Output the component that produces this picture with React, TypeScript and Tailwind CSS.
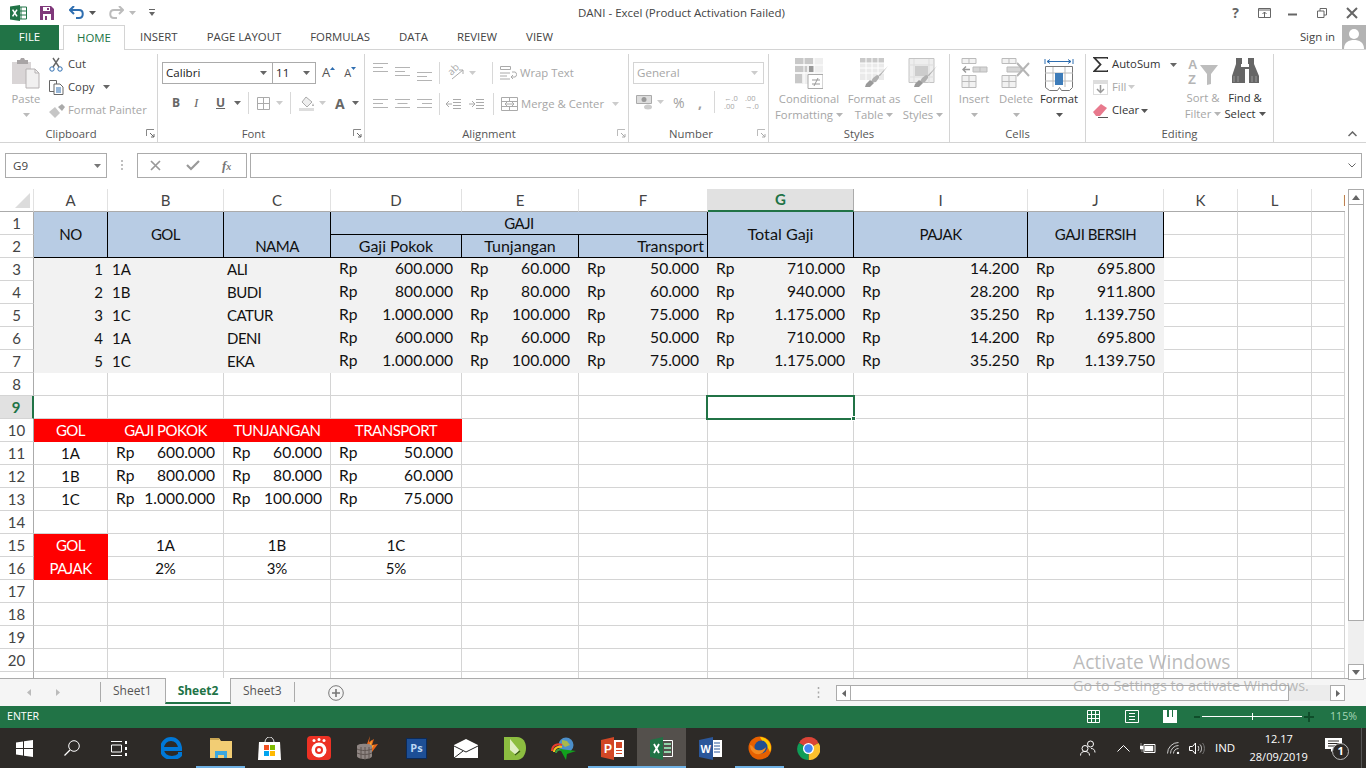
import type { ReactNode } from 'react'
import { twMerge } from 'tailwind-merge'

const Caret = ({ className = '', color = '#777' }: { className?: string; color?: string }) => (
  <svg width="7" height="4" viewBox="0 0 7 4" className={className}>
    <path d="M0 0h7L3.5 4z" fill={color} />
  </svg>
)

const Launcher = ({ dim }: { dim?: boolean }) => (
  <svg width="9" height="9" viewBox="0 0 9 9" className="absolute right-[2px] bottom-[4px]">
    <path d="M.5 7V.5H8" fill="none" stroke={dim ? '#bbb' : '#888'} />
    <path d="M4 4l4 4M8 5v3H5" fill="none" stroke={dim ? '#aaa' : '#666'} />
  </svg>
)

const Lines = ({ x, w = 15, y = 0, align = 'left' }: { x: number; w?: number; y?: number; align?: string }) => (
  <svg width={w} height="12" viewBox="0 0 15 12" style={{ marginLeft: x, marginTop: y }}>
    {[1.5, 5.5, 9.5].map((ly, i) => {
      const short = i === 1 ? 10 : 15
      const sx = align === 'center' ? (15 - short) / 2 : align === 'right' ? 15 - short : 0
      return <path key={ly} d={`M${sx} ${ly}h${short}`} stroke="#b4b4b4" />
    })}
  </svg>
)

const Group = ({ width, label, children, launcher, dim }: { width: string; label: string; children: ReactNode; launcher?: boolean; dim?: boolean }) => (
  <div className={twMerge('relative flex h-[88px] shrink-0 flex-col border-r border-[#d4d4d4]', width)}>
    <div className="relative h-[72px] flex-none">{children}</div>
    <div className={twMerge('flex-1 text-center text-[11.3px] leading-[16px] text-[#555]', launcher && 'pr-[15px]')}>{label}</div>
    {launcher && <Launcher dim={dim} />}
  </div>
)

const BigBtn = ({ icon, l1, l2, width, dim = true, caret = true }: { icon: ReactNode; l1: string; l2?: string; width: string; dim?: boolean; caret?: boolean }) => (
  <div className={twMerge('flex flex-col items-center', width, dim ? 'text-[#a6a6a6]' : 'text-[#333]')}>
    <div className="flex h-[36px] items-start justify-center pt-[3px]">{icon}</div>
    <div className="h-[16px] text-[11.3px] leading-[16px] whitespace-nowrap">{l1}</div>
    <div className="flex h-[16px] items-center gap-[3px] text-[11.3px] leading-[16px] whitespace-nowrap">
      {l2}
      {caret && <Caret color={dim ? '#b5b5b5' : '#555'} />}
    </div>
  </div>
)

const Sep = ({ h = 'h-[22px]', className = '' }: { h?: string; className?: string }) => <div className={twMerge('w-px shrink-0 bg-[#d8d8d8]', h, className)} />

const Clipboard = () => (
  <svg width="30" height="31" viewBox="0 0 30 31">
    <path d="M1 4h19v22H1z" fill="#d9d5d6" />
    <path d="M6 2h3l1-2h3l1 2h3v4H6z" fill="#a8a4a5" />
    <path d="M15 11h9l4 4v15H15z" fill="#f1f0f0" stroke="#b5b1b2" />
    <path d="M24 11v4h4" fill="none" stroke="#b5b1b2" />
  </svg>
)

const CondFmt = () => (
  <svg width="28" height="31" viewBox="0 0 28 31">
    <path d="M0 0h28v26H0z" fill="#eee" />
    <path d="M0 0h18v6H0zM0 8h12v6H0zM0 16h7v9H0z" fill="#c8c8c8" />
    <path d="M14 8h5v6h-5z" fill="#999" />
    <path d="M9 0v26M19 0v26M0 7h28M0 15h28" stroke="#fff" />
    <path d="M14 17h15v14H14z" fill="#fff" stroke="#aaa" transform="translate(-1 -.5)" />
    <path d="M17 22h8M17 26h8M23 20l-4 8" stroke="#999" fill="none" />
  </svg>
)

const TableFmt = () => (
  <svg width="30" height="31" viewBox="0 0 30 31">
    <path d="M1 0h24v22H1z" fill="#eaeaea" />
    <path d="M1 0h24v5H1z" fill="#c9c9c9" />
    <path d="M7 0v22M13 0v22M19 0v22M1 5h24M1 10h24M1 15h24" stroke="#fff" />
    <path d="M29 8l-8 10-3-1-4 3-3 5 6-1 3-4 0-3z" fill="#b0b0b0" />
    <path d="M7 26l4-4 4 3-4 4H6z" fill="#999" />
  </svg>
)

const CellStyle = () => (
  <svg width="30" height="31" viewBox="0 0 30 31">
    <path d="M1 .5h25v24H1z" fill="#eee" stroke="#c4c4c4" />
    <path d="M1 7h25M6 1v24M21 1v24M1 19h25" stroke="#ddd" />
    <path d="M7 8h13v10H7z" fill="#ccc" />
    <path d="M29 8l-8 10-3-1-4 3-3 5 6-1 3-4 0-3z" fill="#b0b0b0" />
    <path d="M7 26l4-4 4 3-4 4H6z" fill="#999" />
  </svg>
)

const InsertIc = () => (
  <svg width="27" height="31" viewBox="0 0 27 31">
    <path d="M1 .5h14v5H1zM8 .5v5M1 17.5h14v12H1zM1 23.5h14M8 17.5v12" fill="#f2f2f2" stroke="#bbb" />
    <path d="M12 9h14v5H12z" fill="#d6d6d6" stroke="#bbb" />
    <path d="M19 9v5" stroke="#bbb" />
    <path d="M2 11.5h7M5 8.5l-3 3 3 3" fill="none" stroke="#999" strokeWidth="1.4" />
  </svg>
)

const DeleteIc = () => (
  <svg width="30" height="31" viewBox="0 0 30 31">
    <path d="M1 .5h14v5H1zM8 .5v5M1 17.5h14v12H1zM1 23.5h14M8 17.5v12" fill="#f2f2f2" stroke="#bbb" />
    <path d="M6 9h14v5H6z" fill="#d6d6d6" stroke="#bbb" />
    <path d="M16 5l12 13M28 5L16 18" stroke="#b5b5b5" strokeWidth="2" />
  </svg>
)

const FormatIc = () => (
  <svg width="30" height="33" viewBox="0 0 30 33">
    <path d="M1 1v5M29 1v5M3 3.500h24M6 1.500l-3 2 3 2M24 1.500l3 2-3 2" fill="none" stroke="#2f6eb0" />
    <path d="M1.500 8.500h27v21l-3 3h-8l-2-3-2 3h-8l-4-3z" fill="#fff" stroke="#777" />
    <path d="M1 15h28M1 23h28M9 9v20M21 9v20" stroke="#bbb" />
    <path d="M11 15h8v12h-8z" fill="#3e7cb9" />
  </svg>
)

const Binoculars = () => (
  <svg width="28" height="27" viewBox="0 0 28 27">
    <path d="M5 1h6v6h-1v3h8V7h-1V1h6v6l5 12v7h-10V12h-4v14H1v-7l4-12z" fill="#666" />
    <path d="M3 19v6M7 19v6M21 19v6M25 19v6" stroke="#999" />
  </svg>
)

const SortIc = () => (
  <svg width="32" height="29" viewBox="0 0 32 29" className="overflow-visible">
    <text x="1" y="12" fontSize="13" fontWeight="bold" fill="#b5b5b5" fontFamily="Liberation Sans, sans-serif">A</text>
    <text x="1" y="27" fontSize="13" fontWeight="bold" fill="#b5b5b5" fontFamily="Liberation Sans, sans-serif">Z</text>
    <path d="M13 8h18l-7 9v10l-4 1V17z" fill="#bdbdbd" />
  </svg>
)

const Tab = ({ children, ml }: { children: ReactNode; ml: string }) => (
  <span className={twMerge('text-[11.4px] text-[#444]', ml)}>{children}</span>
)

const TitleBar = () => (
  <div className="flex h-[25px] items-center text-[#444]">
    <svg width="17" height="16" viewBox="0 0 17 16" className="ml-[10px]">
      <path d="M7 2h9.500v12H7z" fill="#fff" stroke="#217346" />
      <path d="M11 2v12M7 6h9M7 10h9" stroke="#217346" />
      <path d="M0 1.500L10 0v16L0 14.500z" fill="#217346" />
      <path d="M2.600 4.600l4.400 6.800M7 4.600l-4.400 6.800" stroke="#fff" strokeWidth="1.600" />
    </svg>
    <svg width="14" height="14" viewBox="0 0 14 14" className="ml-[13px]">
      <path d="M0 0h11l3 3v11H0z" fill="#80397b" />
      <path d="M3 1h7v4H3z" fill="#fff" />
      <path d="M3 8h8v6H3z" fill="#fff" />
      <path d="M7 2h2v2H7z" fill="#80397b" />
      <path d="M5 10h2v4H5z" fill="#80397b" />
    </svg>
    <svg width="15" height="13" viewBox="0 0 15 13" className="ml-[15px]">
      <path d="M2 4h8c5 0 5 8 0 8H7" fill="none" stroke="#2f6eb0" strokeWidth="2" />
      <path d="M5 0L1 4l4 4" fill="none" stroke="#2f6eb0" strokeWidth="2" />
    </svg>
    <Caret className="ml-[5px]" color="#555" />
    <svg width="15" height="13" viewBox="0 0 15 13" className="ml-[13px]">
      <path d="M13 4H5c-5 0-5 8 0 8h3" fill="none" stroke="#bcbcbc" strokeWidth="2" />
      <path d="M10 0l4 4-4 4" fill="none" stroke="#bcbcbc" strokeWidth="2" />
    </svg>
    <Caret className="ml-[5px]" color="#bbb" />
    <svg width="6" height="7" viewBox="0 0 6 7" className="ml-[13px]">
      <path d="M0 .5h6" stroke="#666" />
      <path d="M0 3h6L3 7z" fill="#666" />
    </svg>
    <div className="ml-[423px] text-[11.5px] whitespace-nowrap">DANI - Excel (Product Activation Failed)</div>
    <div className="ml-auto flex items-center">
      <span className="mr-[19px] text-[14px] font-bold text-[#666]">?</span>
      <svg width="13" height="10" viewBox="0 0 13 10" className="mr-[17px]">
        <path d="M.5.5h12v9H.5zM1 2h11" fill="none" stroke="#666" />
        <path d="M6.500 9V4M4.500 6l2-2 2 2" fill="none" stroke="#666" />
      </svg>
      <svg width="10" height="10" viewBox="0 0 10 10" className="mr-[19px]">
        <path d="M0 6.500h9" stroke="#666" strokeWidth="2" />
      </svg>
      <svg width="10" height="10" viewBox="0 0 10 10" className="mr-[19px]">
        <path d="M.5 3h6.500v6.500H.5zM3 3V.5h6.500V7H7" fill="none" stroke="#666" />
      </svg>
      <svg width="12" height="12" viewBox="0 0 12 12" className="mr-[8px]">
        <path d="M1 1l10 10M11 1L1 11" stroke="#666" strokeWidth="2" />
      </svg>
    </div>
  </div>
)

const TabBar = () => (
  <div className="flex h-[25px] items-center border-b border-[#d4d4d4]">
    <div className="flex h-[25px] w-[59px] items-center justify-center bg-[#217346] text-[11.4px] text-white">FILE</div>
    <div className="relative ml-[4px] flex h-[25px] w-[62px] items-center justify-center border-x border-t border-[#d4d4d4] bg-white text-[11.4px] text-[#217346]">HOME</div>
    <Tab ml="ml-[15px]">INSERT</Tab>
    <Tab ml="ml-[29px]">PAGE LAYOUT</Tab>
    <Tab ml="ml-[29px]">FORMULAS</Tab>
    <Tab ml="ml-[29px]">DATA</Tab>
    <Tab ml="ml-[29px]">REVIEW</Tab>
    <Tab ml="ml-[29px]">VIEW</Tab>
    <div className="ml-auto flex items-center">
      <span className="mr-[7px] text-[11.4px] text-[#444]">Sign in</span>
      <div className="flex h-[24px] w-[24px] items-end justify-center overflow-hidden bg-[#b3b3b3]">
        <svg width="24" height="24" viewBox="0 0 24 24">
          <circle cx="12" cy="9" r="5" fill="#fff" />
          <path d="M2 24c0-7 5-9 10-9s10 2 10 9z" fill="#fff" />
        </svg>
      </div>
    </div>
  </div>
)

const Ribbon = () => (
  <div className="flex h-[93px] items-start border-b border-[#d4d4d4] pt-[4px]">
    <Group width="w-[158px]" label="Clipboard" launcher>
      <div className="flex">
        <div className="ml-[11px] flex w-[30px] flex-col items-center text-[#a6a6a6]">
          <div className="mt-[4px] h-[33px]"><Clipboard /></div>
          <span className="text-[11.3px] leading-[16px]">Paste</span>
          <Caret className="mt-[6px]" color="#bbb" />
        </div>
        <div className="ml-[8px] flex flex-col text-[11.3px]">
          <div className="flex h-[21px] items-center text-[#444]">
            <svg width="14" height="15" viewBox="0 0 14 15" className="mr-[5px]">
              <circle cx="3" cy="12" r="2.200" fill="none" stroke="#2f6eb0" />
              <circle cx="11" cy="12" r="2.200" fill="none" stroke="#2f6eb0" />
              <path d="M4 10L10 1M10 10L4 1" stroke="#666" strokeWidth="1.400" />
            </svg>
            Cut
          </div>
          <div className="flex h-[24px] items-center text-[#444]">
            <svg width="15" height="15" viewBox="0 0 15 15" className="mr-[4px]">
              <path d="M.5.5h7v11h-7z" fill="#fff" stroke="#666" />
              <path d="M5 4h6l3 3v7.500H5z" fill="#fff" stroke="#666" />
              <path d="M7 8h5M7 10h5M7 12h5" stroke="#2f6eb0" />
            </svg>
            Copy
            <Caret className="ml-[9px]" color="#666" />
          </div>
          <div className="flex h-[23px] items-center text-[#a6a6a6]">
            <svg width="16" height="14" viewBox="0 0 16 14" className="mr-[3px]">
              <path d="M9 3l4-3 3 3-3 4z" fill="#aaa" />
              <path d="M0 8l6-5 5 6-5 5z" fill="#c6c6c6" />
            </svg>
            Format Painter
          </div>
        </div>
      </div>
    </Group>
    <Group width="w-[207px]" label="Font" launcher>
      <div className="flex pt-[8px] pl-[4px]">
        <div className="flex h-[22px] w-[111px] items-center justify-between border border-[#ababab] pr-[5px] pl-[3px] text-[11.6px] text-[#222]">
          Calibri <Caret color="#666" />
        </div>
        <div className="-ml-px flex h-[22px] w-[44px] items-center justify-between border border-[#ababab] pr-[5px] pl-[3px] text-[11.6px] text-[#222]">
          11 <Caret color="#666" />
        </div>
        <div className="ml-[6px] flex h-[22px] items-center text-[13px] text-[#555]">
          <span>A</span>
          <svg width="5" height="3" viewBox="0 0 5 3" className="mb-[10px]"><path d="M0 3h5L2.500 0z" fill="#2f6eb0" /></svg>
        </div>
        <div className="ml-[9px] flex h-[22px] items-center text-[11px] text-[#555]">
          <span>A</span>
          <svg width="5" height="3" viewBox="0 0 5 3" className="mb-[10px]"><path d="M0 0h5L2.500 3z" fill="#2f6eb0" /></svg>
        </div>
      </div>
      <div className="mt-[7px] flex h-[24px] items-center text-[#666]">
        <span className="ml-[14px] w-[8px] text-[12px] font-bold">B</span>
        <span className="ml-[14px] w-[8px] font-['Liberation_Serif',serif] text-[13px] italic">I</span>
        <span className="ml-[14px] w-[9px] text-[12px] font-bold underline">U</span>
        <Caret className="ml-[9px]" color="#666" />
        <Sep className="ml-[7px]" />
        <svg width="13" height="13" viewBox="0 0 13 13" className="ml-[8px]">
          <path d="M.5.5h12v12H.5zM6.500 1v11M1 6.500h11" fill="none" stroke="#aaa" />
        </svg>
        <Caret className="ml-[6px]" color="#ccc" />
        <Sep className="ml-[7px]" />
        <svg width="16" height="15" viewBox="0 0 16 15" className="ml-[8px]">
          <path d="M7 1l6 5-5 5-5-5z" fill="#eee" stroke="#aaa" />
          <path d="M0 12h15v3H0z" fill="#ddd" />
          <path d="M14 7l1 3h-2z" fill="#aaa" />
        </svg>
        <Caret className="ml-[4px]" color="#ccc" />
        <span className="ml-[9px] text-[14px] font-bold">A</span>
        <Caret className="ml-[7px]" color="#666" />
      </div>
    </Group>
    <Group width="w-[264px]" label="Alignment" launcher dim>
      <div className="flex h-[38px] items-start pt-[8px]">
        <div className="flex w-[74px]">
          <Lines x={8} />
          <Lines x={7} y={4} />
          <Lines x={7} y={9} />
        </div>
        <Sep />
        <div className="relative mt-[1px] ml-[7px] h-[18px] w-[18px]">
          <span className="absolute top-[1px] left-0 -rotate-45 text-[10px] leading-[10px] text-[#aaa]">ab</span>
          <svg width="18" height="18" viewBox="0 0 18 18" className="absolute inset-0">
            <path d="M5 16L16 7M12 7h4v4" fill="none" stroke="#aaa" />
          </svg>
        </div>
        <Caret className="mt-[9px] ml-[4px]" color="#ccc" />
        <Sep className="ml-[16px]" />
        <div className="ml-[7px] flex h-[22px] items-center text-[11.3px] text-[#a6a6a6]">
          <svg width="17" height="15" viewBox="0 0 17 15" className="mr-[3px]">
            <path d="M.5.5h10v3H.5zM0 7h10M0 10h7M0 13h10" fill="none" stroke="#aaa" />
            <path d="M12 6h3c2 0 2 5 0 5h-4M13 9l-2 2 2 2" fill="none" stroke="#aaa" />
          </svg>
          Wrap Text
        </div>
      </div>
      <div className="flex h-[24px] items-center">
        <div className="flex w-[74px]">
          <Lines x={8} />
          <Lines x={7} align="center" />
          <Lines x={7} align="right" />
        </div>
        <Sep />
        <svg width="15" height="12" viewBox="0 0 15 12" className="ml-[6px]">
          <path d="M7 1.500h8M7 4.500h8M7 7.500h8M7 10.500h8M6 6H0M3 3L0 6l3 3" fill="none" stroke="#aaa" />
        </svg>
        <svg width="15" height="12" viewBox="0 0 15 12" className="ml-[8px]">
          <path d="M7 1.500h8M7 4.500h8M7 7.500h8M7 10.500h8M0 6h6M3 3l3 3-3 3" fill="none" stroke="#aaa" />
        </svg>
        <Sep className="ml-[9px]" />
        <div className="ml-[7px] flex h-[22px] items-center text-[11.3px] text-[#a6a6a6]">
          <svg width="17" height="14" viewBox="0 0 17 14" className="mr-[3px]">
            <path d="M.5.5h16v13H.5zM1 4.500h15M1 9.500h15M8.500 1v3M8.500 10v3M4 7h9M6 5L4 7l2 2M11 5l2 2-2 2" fill="none" stroke="#aaa" />
          </svg>
          Merge &amp; Center
          <Caret className="ml-[8px]" color="#ccc" />
        </div>
      </div>
    </Group>
    <Group width="w-[140px]" label="Number" launcher dim>
      <div className="pt-[8px] pl-[4px]">
        <div className="flex h-[22px] w-[131px] items-center justify-between border border-[#d4d4d4] pr-[5px] pl-[3px] text-[11.6px] text-[#a6a6a6]">
          General <Caret color="#ccc" />
        </div>
      </div>
      <div className="mt-[6px] flex h-[24px] items-center text-[#a6a6a6]">
        <svg width="17" height="15" viewBox="0 0 17 15" className="ml-[7px]">
          <path d="M.5.500h15v8H.5z" fill="#ddd" stroke="#aaa" />
          <circle cx="8" cy="4.500" r="2.500" fill="#999" />
          <ellipse cx="12" cy="12" rx="4" ry="2.500" fill="#ccc" />
        </svg>
        <Caret className="ml-[4px]" color="#ccc" />
        <span className="ml-[9px] w-[13px] text-[14px] text-[#a0a0a0]">%</span>
        <span className="ml-[12px] w-[5px] text-[14px] font-bold text-[#a0a0a0]">,</span>
        <Sep className="ml-[11px]" />
        <div className="ml-[9px] w-[13px] whitespace-nowrap text-[7.5px] leading-[8px]">←.0<br />.00</div>
        <div className="ml-[8px] w-[13px] whitespace-nowrap text-[7.5px] leading-[8px]">.00<br />→.0</div>
      </div>
    </Group>
    <Group width="w-[181px]" label="Styles">
      <div className="flex pt-[1px]">
        <BigBtn width="w-[80px]" icon={<CondFmt />} l1="Conditional" l2="Formatting" />
        <BigBtn width="w-[52px] -ml-[1px]" icon={<TableFmt />} l1="Format as" l2="Table" />
        <BigBtn width="w-[46px]" icon={<CellStyle />} l1="Cell" l2="Styles" />
      </div>
    </Group>
    <Group width="w-[136px]" label="Cells">
      <div className="flex pt-[1px]">
        <BigBtn width="w-[48px]" icon={<InsertIc />} l1="Insert" />
        <BigBtn width="w-[36px]" icon={<DeleteIc />} l1="Delete" />
        <BigBtn width="w-[50px]" icon={<FormatIc />} l1="Format" dim={false} />
      </div>
    </Group>
    <Group width="w-[188px]" label="Editing">
      <div className="flex">
        <div className="ml-[7px] flex w-[92px] flex-col text-[11.3px]">
          <div className="flex h-[21px] items-center text-[#333]">
            <svg width="15" height="15" viewBox="0 0 15 15" className="mr-[4px]">
              <path d="M15 2V.5H1L7.500 7.500 1 14.500h14V13" fill="none" stroke="#333" strokeWidth="1.800" />
            </svg>
            AutoSum
            <Caret className="ml-[10px]" color="#666" />
          </div>
          <div className="flex h-[24px] items-center text-[#a6a6a6]">
            <svg width="15" height="15" viewBox="0 0 15 15" className="mr-[4px]">
              <path d="M0 0h15v15H0z" fill="#ddd" />
              <path d="M1 4h13v10H1z" fill="#fff" />
              <path d="M7.500 5v7M4 9l3.500 3.500L11 9" fill="none" stroke="#999" strokeWidth="1.500" />
            </svg>
            Fill
            <Caret className="ml-[2px]" color="#ccc" />
          </div>
          <div className="flex h-[23px] items-center text-[#333]">
            <svg width="15" height="14" viewBox="0 0 15 14" className="mr-[4px]">
              <path d="M0 8l8-8 6 4-7 8H3z" fill="#e8798d" />
              <path d="M5 13.500h10" stroke="#555" />
            </svg>
            Clear
            <Caret className="ml-[2px]" color="#555" />
          </div>
        </div>
        <BigBtn width="w-[36px]" icon={<SortIc />} l1="Sort &" l2="Filter" />
        <BigBtn width="w-[48px]" icon={<Binoculars />} l1="Find &" l2="Select" dim={false} />
      </div>
    </Group>
    <div className="flex h-[88px] flex-1 items-end justify-end pr-[9px] pb-[5px]">
      <svg width="9" height="6" viewBox="0 0 9 6"><path d="M.5 5l4-4 4 4" fill="none" stroke="#666" strokeWidth="1.500" /></svg>
    </div>
  </div>
)

const FormulaBar = () => (
  <div className="mt-[10px] flex h-[25px] items-stretch text-[#444]">
    <div className="ml-[5px] flex w-[102px] items-center justify-between border border-[#ababab] pr-[5px] pl-[7px] text-[11.6px]">
      G9 <Caret color="#777" />
    </div>
    <svg width="3" height="11" viewBox="0 0 3 11" className="mt-[7px] ml-[14px]">
      <path d="M1 0v2M1 4v2M1 8v2" stroke="#aaa" strokeWidth="1.500" />
    </svg>
    <div className="ml-[13px] flex w-[110px] items-center border border-[#ababab]">
      <svg width="11" height="11" viewBox="0 0 11 11" className="ml-[12px]">
        <path d="M1 1l9 9M10 1l-9 9" stroke="#999" strokeWidth="1.700" />
      </svg>
      <svg width="14" height="11" viewBox="0 0 14 11" className="ml-[25px]">
        <path d="M1 5l4 4 8-8" fill="none" stroke="#999" strokeWidth="2.200" />
      </svg>
      <span className="ml-[22px] font-['Liberation_Serif',serif] text-[13px] font-bold text-[#777] italic">f<span className="text-[10px]">x</span></span>
    </div>
    <div className="ml-[3px] flex w-[1112px] items-center justify-end border border-[#ababab] pr-[5px]">
      <svg width="8" height="5" viewBox="0 0 8 5"><path d="M.5.5l3.500 3.500L7.500.5" fill="none" stroke="#666" /></svg>
    </div>
  </div>
)

const Cell = ({ className, children }: { className?: string; children?: ReactNode }) => (
  <div className={twMerge('flex items-center overflow-hidden border-r border-b border-[#d4d4d4] px-[4px] whitespace-nowrap text-[#111]', className)}>
    {children}
  </div>
)

const Rp = ({ v, className }: { v: string; className?: string }) => (
  <Cell className={twMerge('justify-between pr-[8px] pl-[8px] text-[15.6px]', className)}>
    <span>Rp</span>
    <span>{v}</span>
  </Cell>
)

const RowHead = ({ n, active }: { n?: number; active?: boolean }) => (
  <div className={twMerge('flex items-center justify-center border-r border-b border-[#d4d4d4] border-r-[#ababab] text-[#444]', active && 'bg-[#e1e1e1] font-bold text-[#217346] border-r-[#217346] border-r-2')}>
    {n}
  </div>
)

const Blanks = ({ n }: { n: number }) => (
  <>
    {Array.from({ length: n }, (_, i) => (
      <Cell key={i} />
    ))}
  </>
)

const GREY = 'bg-[#f2f2f2] border-[#f2f2f2]'
const BLUE = 'bg-[#b8cce4] border-black justify-center text-[16px]'
const CAPS = 'text-[15px] tracking-[-0.5px]'
const RED = 'bg-[#ff0000] border-[#ff0000] text-white justify-center text-[15px] tracking-[-0.5px]'

const people = [
  [1, '1A', 'ALI', '600.000', '60.000', '50.000', '710.000', '14.200', '695.800'],
  [2, '1B', 'BUDI', '800.000', '80.000', '60.000', '940.000', '28.200', '911.800'],
  [3, '1C', 'CATUR', '1.000.000', '100.000', '75.000', '1.175.000', '35.250', '1.139.750'],
  [4, '1A', 'DENI', '600.000', '60.000', '50.000', '710.000', '14.200', '695.800'],
  [5, '1C', 'EKA', '1.000.000', '100.000', '75.000', '1.175.000', '35.250', '1.139.750'],
]

const rates = [
  ['1A', '600.000', '60.000', '50.000'],
  ['1B', '800.000', '80.000', '60.000'],
  ['1C', '1.000.000', '100.000', '75.000'],
]

const colHeads = ['A', 'B', 'C', 'D', 'E', 'F', 'G', 'I', 'J', 'K', 'L', 'M']

const Sheet = () => (
  <div className="grid h-[489px] w-[1345px] shrink-0 auto-rows-[23px] grid-cols-[34px_74px_116px_107px_131px_117px_129px_146px_174px_136px_74px_74px_33px] overflow-hidden font-['Lato','Open_Sans',sans-serif] text-[15px]">
    <div className="flex items-end justify-end border-r border-b border-[#ababab] border-r-[#e1e1e1] pr-[3px] pb-[3px]">
      <svg width="15" height="15" viewBox="0 0 15 15"><path d="M15 0v15H0z" fill="#dcdcdc" /></svg>
    </div>
    {colHeads.map((c) => (
      <div
        key={c}
        className={twMerge(
          'flex items-center justify-center overflow-hidden border-r border-b border-[#e1e1e1] border-b-[#ababab] text-[#444]',
          c === 'G' && 'bg-[#e1e1e1] font-bold text-[#217346] border-b-2 border-b-[#217346] border-r-[#ababab]',
          c === 'M' && 'justify-start pl-[31px] border-r-0',
        )}
      >
        {c}
      </div>
    ))}

    <RowHead n={1} />
    <Cell className={twMerge(BLUE, CAPS, 'row-span-2')}>NO</Cell>
    <Cell className={twMerge(BLUE, CAPS, 'row-span-2')}>GOL</Cell>
    <Cell className={twMerge(BLUE, CAPS, 'row-span-2 items-end pb-0')}>NAMA</Cell>
    <Cell className={twMerge(BLUE, CAPS, 'col-span-3')}>GAJI</Cell>
    <Cell className={twMerge(BLUE, 'row-span-2 text-[16.2px]')}>Total Gaji</Cell>
    <Cell className={twMerge(BLUE, CAPS, 'row-span-2')}>PAJAK</Cell>
    <Cell className={twMerge(BLUE, CAPS, 'row-span-2')}>GAJI BERSIH</Cell>
    <Blanks n={3} />
    <RowHead n={2} />
    <Cell className={BLUE}>Gaji Pokok</Cell>
    <Cell className={BLUE}>Tunjangan</Cell>
    <Cell className={twMerge(BLUE, 'justify-end pr-[3px]')}>Transport</Cell>
    <Blanks n={3} />

    {people.map((p, i) => (
      <div key={i} className="contents">
        <RowHead n={i + 3} />
        <Cell className={twMerge(GREY, 'justify-end')}>{p[0]}</Cell>
        <Cell className={GREY}>{p[1]}</Cell>
        <Cell className={twMerge(GREY, CAPS, 'px-[3px]')}>{p[2]}</Cell>
        <Rp v={p[3] as string} className={GREY} />
        <Rp v={p[4] as string} className={GREY} />
        <Rp v={p[5] as string} className={GREY} />
        <Rp v={p[6] as string} className={GREY} />
        <Rp v={p[7] as string} className={GREY} />
        <Rp v={p[8] as string} className={GREY} />
        <Blanks n={3} />
      </div>
    ))}

    <RowHead n={8} />
    <Blanks n={12} />
    <RowHead n={9} active />
    <Blanks n={6} />
    <div className="relative border-r border-b border-[#d4d4d4]">
      <div className="absolute -top-[1px] -left-[2px] h-[25px] w-[149px] border-2 border-[#217346]" />
      <div className="absolute right-[-3px] bottom-[-3px] h-[5px] w-[5px] border border-white bg-[#217346]" />
    </div>
    <Blanks n={5} />

    <RowHead n={10} />
    <Cell className={RED}>GOL</Cell>
    <Cell className={RED}>GAJI POKOK</Cell>
    <Cell className={RED}>TUNJANGAN</Cell>
    <Cell className={RED}>TRANSPORT</Cell>
    <Blanks n={8} />

    {rates.map((r, i) => (
      <div key={r[0]} className="contents">
        <RowHead n={i + 11} />
        <Cell className="justify-center">{r[0]}</Cell>
        <Rp v={r[1]} />
        <Rp v={r[2]} />
        <Rp v={r[3]} />
        <Blanks n={8} />
      </div>
    ))}

    <RowHead n={14} />
    <Blanks n={12} />

    <RowHead n={15} />
    <Cell className={RED}>GOL</Cell>
    <Cell className="justify-center">1A</Cell>
    <Cell className="justify-center">1B</Cell>
    <Cell className="justify-center">1C</Cell>
    <Blanks n={8} />

    <RowHead n={16} />
    <Cell className={RED}>PAJAK</Cell>
    <Cell className="justify-center">2%</Cell>
    <Cell className="justify-center">3%</Cell>
    <Cell className="justify-center">5%</Cell>
    <Blanks n={8} />

    {[17, 18, 19, 20].map((n) => (
      <div key={n} className="contents">
        <RowHead n={n} />
        <Blanks n={12} />
      </div>
    ))}
    <RowHead />
    <Blanks n={12} />
  </div>
)

const VScroll = () => (
  <div className="ml-[3px] flex h-[491px] w-[16px] flex-col bg-[#efefef]">
    <div className="flex h-[16px] items-center justify-center border border-[#ababab] bg-white">
      <svg width="8" height="5" viewBox="0 0 8 5"><path d="M0 5h8L4 0z" fill="#666" /></svg>
    </div>
    <div className="h-[416px] border-x border-b border-[#ababab] bg-white" />
    <div className="flex-1" />
    <div className="flex h-[16px] items-center justify-center border border-[#ababab] bg-white">
      <svg width="8" height="5" viewBox="0 0 8 5"><path d="M0 0h8L4 5z" fill="#666" /></svg>
    </div>
  </div>
)

const SheetTabs = () => (
  <div className="flex h-[28px] items-start border-t border-[#ababab] bg-[#f5f5f5] text-[12px] text-[#555]">
    <svg width="4" height="7" viewBox="0 0 4 7" className="mt-[10px] ml-[27px]"><path d="M4 0v7L0 3.500z" fill="#bbb" /></svg>
    <svg width="4" height="7" viewBox="0 0 4 7" className="mt-[10px] ml-[25px]"><path d="M0 0v7l4-3.500z" fill="#bbb" /></svg>
    <div className="mt-[3px] ml-[40px] h-[20px] w-px bg-[#ababab]" />
    <span className="mt-[3px] ml-[12px] w-[52px]">Sheet1</span>
    <div className="-mt-px flex h-[26px] w-[66px] items-center justify-center border-x border-b-2 border-[#ababab] border-b-[#217346] bg-white pt-[1px] font-bold text-[#217346]">Sheet2</div>
    <span className="mt-[3px] ml-[12px] w-[51px]">Sheet3</span>
    <div className="mt-[3px] h-[20px] w-px bg-[#ababab]" />
    <svg width="16" height="16" viewBox="0 0 16 16" className="mt-[6px] ml-[33px]">
      <circle cx="8" cy="8" r="7.300" fill="none" stroke="#777" />
      <path d="M8 4v8M4 8h8" stroke="#777" strokeWidth="1.600" />
    </svg>
    <svg width="3" height="11" viewBox="0 0 3 11" className="mt-[8px] ml-[473px]">
      <path d="M1.500 0v2M1.500 4.500v2M1.500 9v2" stroke="#aaa" strokeWidth="1.500" />
    </svg>
    <div className="mt-[6px] ml-[16px] flex h-[16px] w-[509px] bg-[#ececec]">
      <div className="flex w-[15px] items-center justify-center border border-[#ababab] bg-white">
        <svg width="4" height="7" viewBox="0 0 4 7"><path d="M4 0v7L0 3.500z" fill="#666" /></svg>
      </div>
      <div className="-ml-px w-[439px] border border-[#ababab] bg-white" />
      <div className="flex-1" />
      <div className="flex w-[15px] items-center justify-center border border-[#ababab] bg-white">
        <svg width="4" height="7" viewBox="0 0 4 7"><path d="M0 0v7l4-3.500z" fill="#666" /></svg>
      </div>
    </div>
  </div>
)

const StatusBar = () => (
  <div className="flex h-[22px] items-center bg-[#217346] text-[10.6px] text-white">
    <span className="ml-[7px]">ENTER</span>
    <div className="ml-auto flex items-center">
      <svg width="13" height="13" viewBox="0 0 13 13" className="mr-[25px]">
        <path d="M.5.5h12v12H.5zM4.500 1v11M8.500 1v11M1 4.500h11M1 8.500h11" fill="none" stroke="#fff" />
      </svg>
      <svg width="14" height="13" viewBox="0 0 14 13" className="mr-[24px]">
        <path d="M.5.5h13v12H.5z" fill="none" stroke="#fff" />
        <path d="M4 3.500h6M4 6.500h6M4 9.500h6" stroke="#fff" />
      </svg>
      <svg width="14" height="13" viewBox="0 0 14 13" className="mr-[17px]">
        <path d="M0 0h14v13H0z" fill="#fff" />
        <path d="M4 0h2v7H4zM9 0h1v7H9z" fill="#217346" />
      </svg>
      <div className="mr-[-1px] h-[2px] w-[6px] bg-[#0f4d2a]" />
      <div className="relative ml-[3px] h-px w-[100px] bg-white">
        <div className="absolute top-[-3px] left-[50px] h-[7px] w-px bg-white" />
      </div>
      <svg width="10" height="10" viewBox="0 0 10 10" className="mr-[16px] ml-[2px]">
        <path d="M5 0v10M0 5h10" stroke="#0f4d2a" strokeWidth="2" />
      </svg>
      <span className="mr-[9px] text-[#a7d8b8]">115%</span>
    </div>
  </div>
)

const TaskIcon = ({ children, active, underline }: { children: ReactNode; active?: boolean; underline?: boolean }) => (
  <div className={twMerge('flex h-[40px] w-[49px] shrink-0 items-center justify-center border-b-2 border-transparent pt-[2px]', active && 'bg-[#54504c] border-[#6fb1e4]', underline && 'border-[#6fb1e4]')}>
    {children}
  </div>
)

const Taskbar = () => (
  <div className="flex h-[40px] items-center bg-[#2d2a27] text-white">
    <div className="flex w-[48px] justify-center">
      <svg width="17" height="17" viewBox="0 0 17 17"><path d="M0 2.400L7 1.400V8H0zM8 1.300L17 0v8H8zM0 9h7v6.600l-7-1zM8 9h9v8l-9-1.300z" fill="#fff" /></svg>
    </div>
    <div className="flex w-[48px] justify-center">
      <svg width="16" height="16" viewBox="0 0 16 16"><circle cx="10" cy="6" r="5.300" fill="none" stroke="#fff" /><path d="M6 10l-5.500 5.500" stroke="#fff" strokeWidth="1.300" /></svg>
    </div>
    <div className="flex w-[51px] justify-center pr-[3px]">
      <svg width="16" height="15" viewBox="0 0 16 15" className="mr-[2px]">
        <path d="M0 .5h11M0 14.500h11M.5 4h10v7H.5z" fill="none" stroke="#fff" />
        <path d="M14 0h2v3h-2zM14 6h2v3h-2zM14 12h2v3h-2z" fill="#fff" />
      </svg>
    </div>
    <TaskIcon>
      <svg width="21" height="22" viewBox="0 0 21 22"><path d="M2 12h17C19 6 15 2 10 2 5 2 1 6 1 12c0 6 5 9 10 9 3 0 6-1 8-3v-3" fill="none" stroke="#0078d7" strokeWidth="4" /></svg>
    </TaskIcon>
    <TaskIcon underline>
      <svg width="22" height="20" viewBox="0 0 22 20">
        <path d="M0 0h9l2 3h11v17H0z" fill="#f2cd74" />
        <path d="M0 0h9v2H0z" fill="#c9a552" />
        <path d="M5 13h12v7h-3v-3H8v3H5z" fill="#3ba7df" />
      </svg>
    </TaskIcon>
    <TaskIcon>
      <svg width="23" height="23" viewBox="0 0 23 23">
        <path d="M7 6c0-8 9-8 9 0" fill="none" stroke="#fff" />
        <path d="M1 5h21l1 18H0z" fill="#fff" />
        <path d="M6 8h5v5H6z" fill="#f25022" /><path d="M12 8h5v5h-5z" fill="#7fba00" />
        <path d="M6 14h5v5H6z" fill="#00a4ef" /><path d="M12 14h5v5h-5z" fill="#ffb900" />
      </svg>
    </TaskIcon>
    <TaskIcon>
      <svg width="24" height="24" viewBox="0 0 24 24">
        <rect width="24" height="24" rx="4" fill="#ed3124" />
        <circle cx="12" cy="14" r="7.500" fill="#fff" />
        <circle cx="12" cy="14" r="4" fill="#ed3124" />
        <circle cx="12" cy="14" r="2" fill="#fff" />
        <circle cx="7" cy="4.500" r="1.500" fill="#fff" /><circle cx="12" cy="3.500" r="1.500" fill="#fff" /><circle cx="17" cy="4.500" r="1.500" fill="#fff" />
      </svg>
    </TaskIcon>
    <TaskIcon>
      <svg width="24" height="24" viewBox="0 0 24 24">
        <path d="M14 0l-1 6 5-3-2 6 6-1-6 8H8z" fill="#e8671b" />
        <path d="M16 4l-1 6 3-1-3 5H10z" fill="#f9b233" />
        <path d="M1 10c0-3 15-3 15 0v10c0 4-15 4-15 0z" fill="#8f8683" />
        <path d="M1 13c4 2 11 2 15 0M1 17c4 2 11 2 15 0M5 11v12M9 11v13M13 11v12" fill="none" stroke="#5f5551" />
      </svg>
    </TaskIcon>
    <TaskIcon>
      <div className="flex h-[21px] w-[21px] items-center justify-center border border-[#0c2a57] bg-[#1d4f96] text-[11px] font-bold text-[#bcd7f2]">Ps</div>
    </TaskIcon>
    <TaskIcon>
      <svg width="24" height="19" viewBox="0 0 24 19">
        <path d="M0 6l12-6 12 6v13H0z" fill="#fff" />
        <path d="M0 7l12 6 12-6M0 19l9-7" fill="none" stroke="#222" />
      </svg>
    </TaskIcon>
    <TaskIcon>
      <svg width="22" height="23" viewBox="0 0 22 23">
        <path d="M0 0h13c6 0 9 5 9 11 0 7-4 12-9 12H0z" fill="#8cbd40" />
        <path d="M6 2l9 11-3 5-6-5z" fill="#dfeec4" />
        <path d="M11 18l5-4" stroke="#3a5e16" strokeWidth="1.500" />
      </svg>
    </TaskIcon>
    <TaskIcon>
      <svg width="25" height="23" viewBox="0 0 25 23">
        <circle cx="15" cy="8" r="7.500" fill="#4c8fc9" />
        <path d="M11 3l5 1 3 4-5 2-3-3z" fill="#a9b94a" />
        <path d="M1 14c0-6 6-8 10-6" fill="none" stroke="#e93b2e" strokeWidth="2" />
        <path d="M3 15c0-4 4-6 8-5" fill="none" stroke="#f8c01b" strokeWidth="2" />
        <path d="M5 16c0-3 3-4 6-3" fill="none" stroke="#3a9a3d" strokeWidth="2" />
        <path d="M9 12l16 2-9 3-1 6z" fill="#11a11d" />
      </svg>
    </TaskIcon>
    <TaskIcon underline>
      <svg width="23" height="23" viewBox="0 0 23 23">
        <path d="M12 3h11v17H12z" fill="#fff" />
        <path d="M0 3l13-3v23L0 20z" fill="#d24726" />
        <path d="M15 5h6v6h-6z" fill="#d24726" />
        <path d="M15 13h6v1h-6zM15 16h6v1h-6z" fill="#d24726" />
        <text x="3" y="16" fontSize="12" fontWeight="bold" fill="#fff" fontFamily="Liberation Sans, sans-serif">P</text>
      </svg>
    </TaskIcon>
    <TaskIcon active>
      <svg width="23" height="23" viewBox="0 0 23 23">
        <path d="M12 3.500h10.500v16H12z" fill="none" stroke="#fff" />
        <path d="M14 6h7v2h-7zM14 10h7v2h-7zM14 14h7v2h-7z" fill="#8fd3a8" />
        <path d="M0 3l13-3v23L0 20z" fill="#217346" />
        <path d="M4 7l5 9M9 7l-5 9" stroke="#fff" strokeWidth="1.800" />
      </svg>
    </TaskIcon>
    <TaskIcon>
      <svg width="23" height="23" viewBox="0 0 23 23">
        <path d="M12 3h11v17H12z" fill="#fff" />
        <path d="M15 6h6M15 9h6M15 12h6M15 15h6" stroke="#2b579a" />
        <path d="M0 3l14-3v23L0 20z" fill="#2b579a" />
        <text x="1.500" y="16" fontSize="11" fontWeight="bold" fill="#fff" fontFamily="Liberation Sans, sans-serif">W</text>
      </svg>
    </TaskIcon>
    <TaskIcon underline>
      <svg width="24" height="24" viewBox="0 0 24 24">
        <circle cx="12" cy="12" r="11.500" fill="#e66000" />
        <path d="M12 1a11 11 0 0 1 11 11c0 2-1 4-1 4-2-6-8-10-10-15z" fill="#ffcb00" />
        <circle cx="13" cy="11" r="6.500" fill="#1f4f91" />
        <path d="M2 9c3 0 3 4 7 5 4 1 8-1 9-3-1 6-7 9-12 6-3-2-4-5-4-8z" fill="#f58a1f" />
      </svg>
    </TaskIcon>
    <TaskIcon>
      <svg width="23" height="23" viewBox="0 0 23 23">
        <path d="M11.500 11.500L2 6a11 11 0 0 1 19.500 0z" fill="#db4437" />
        <path d="M11.500 11.500L21.500 6A11 11 0 0 1 11.500 23z" fill="#fbc02d" />
        <path d="M11.500 11.500V23A11 11 0 0 1 2 6z" fill="#0f9d58" />
        <circle cx="11.500" cy="11.500" r="5.500" fill="#fff" />
        <circle cx="11.500" cy="11.500" r="4.200" fill="#4285f4" />
      </svg>
    </TaskIcon>
    <svg width="16" height="16" viewBox="0 0 16 16" className="ml-[247px]">
      <circle cx="10.500" cy="4" r="3" fill="none" stroke="#fff" />
      <circle cx="5" cy="8.500" r="3" fill="none" stroke="#fff" />
      <path d="M.5 15.500c0-3 2-4 4.500-4s4.500 1 4.500 4M11 8.500c2 0 4 1 4 4" fill="none" stroke="#fff" />
    </svg>
    <svg width="13" height="7" viewBox="0 0 13 7" className="ml-[21px]"><path d="M.5 6.500l6-6 6 6" fill="none" stroke="#fff" /></svg>
    <svg width="16" height="11" viewBox="0 0 16 11" className="ml-[10px]">
      <path d="M4 1.500h11v8H4z" fill="none" stroke="#fff" />
      <path d="M5 3h8v5H5zM0 3h3v3H0zM1 0v3M2 6v3" fill="#fff" stroke="#fff" strokeWidth=".5" />
    </svg>
    <svg width="13" height="12" viewBox="0 0 13 12" className="ml-[11px]">
      <path d="M.5 11.500a11 11 0 0 1 11-11M3.500 11.500a8 8 0 0 1 8-8M6.500 11.500a5 5 0 0 1 5-5" fill="none" stroke="#ccc" />
      <circle cx="11" cy="11" r="1.200" fill="#fff" />
    </svg>
    <svg width="16" height="13" viewBox="0 0 16 13" className="ml-[9px]">
      <path d="M.5 4.500h3l3-3.500v11l-3-3.500h-3z" fill="none" stroke="#fff" />
      <path d="M9 4c1 1 1 4 0 5M11 2.500c2 2 2 6 0 8" fill="none" stroke="#ddd" />
      <path d="M13.500 1c2.500 3 2.500 8 0 11" fill="none" stroke="#777" />
    </svg>
    <span className="ml-[10px] text-[11.5px]">IND</span>
    <div className="ml-[11px] flex w-[65px] flex-col items-center text-[11px] leading-[18px]">
      <span>12.17</span>
      <span>28/09/2019</span>
    </div>
    <div className="relative ml-[14px] h-[24px] w-[24px]">
      <svg width="17" height="14" viewBox="0 0 17 14" className="absolute top-[2px] left-0">
        <path d="M0 0h17v11H9l-3 3v-3H0z" fill="#fff" />
        <path d="M3 3h11M3 5.500h11M3 8h11" stroke="#2d2a27" />
      </svg>
      <div className="absolute top-[7px] left-[7px] flex h-[17px] w-[17px] items-center justify-center rounded-full border border-[#bbb] bg-[#2d2a27] text-[11px] font-bold">1</div>
    </div>
    <div className="ml-[12px] h-[40px] w-px bg-[#555]" />
  </div>
)

export default function App() {
  return (
    <div className="relative h-[768px] w-[1366px] overflow-hidden bg-white font-['Open_Sans','Noto_Sans',sans-serif]">
      <TitleBar />
      <TabBar />
      <Ribbon />
      <FormulaBar />
      <div className="mt-[11px] flex h-[489px] items-start">
        <Sheet />
        <VScroll />
      </div>
      <SheetTabs />
      <StatusBar />
      <Taskbar />
      <div className="pointer-events-none absolute top-[649px] left-[1073px] whitespace-nowrap text-[#a9a9a9]/80">
        <div className="text-[19.2px] leading-[26px]">Activate Windows</div>
        <div className="text-[14.4px] leading-[22px]">Go to Settings to activate Windows.</div>
      </div>
    </div>
  )
}
